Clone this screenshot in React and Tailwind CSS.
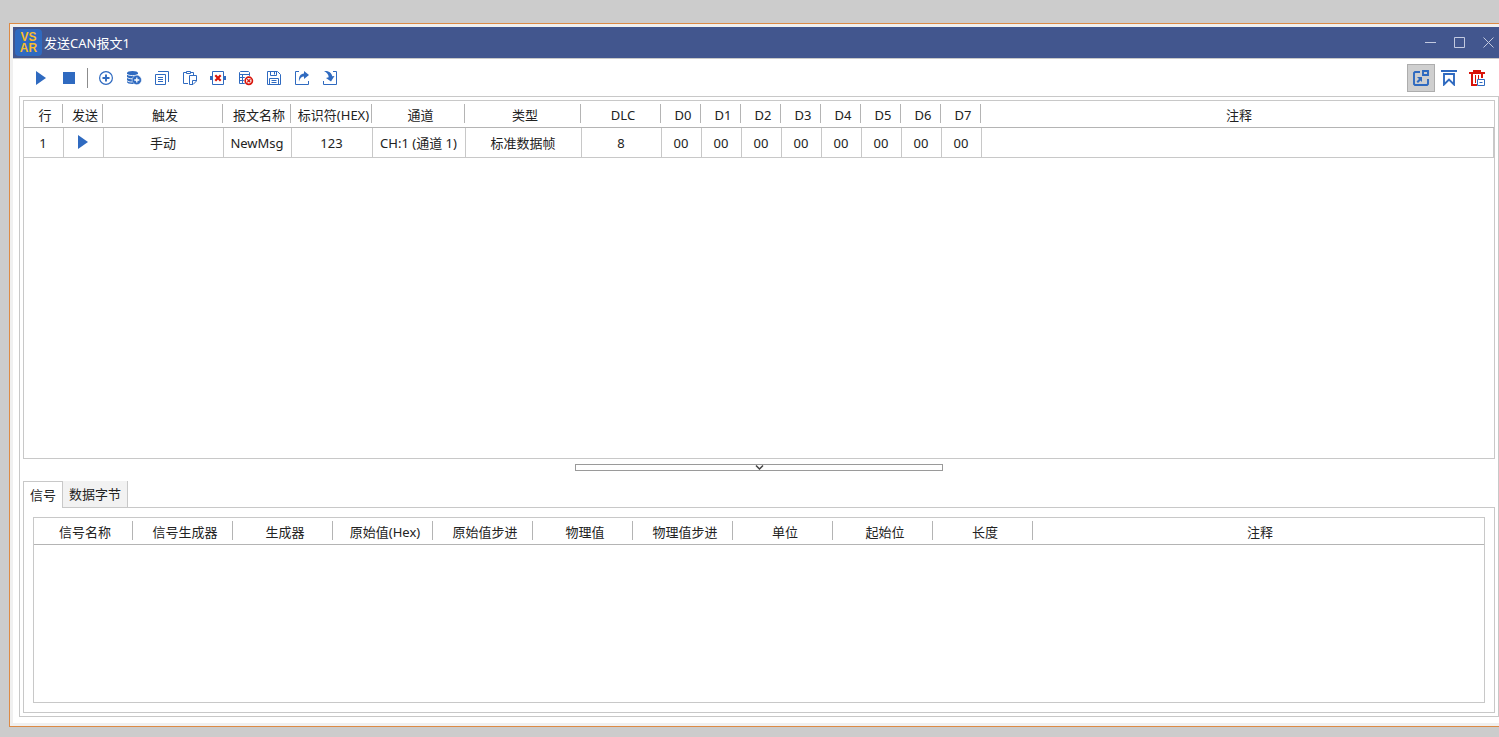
import { useState } from "react"

const BLUE = "#2f6ac0"
const RED = "#d8140a"

const messageColumns = [
  { name: "行", width: "w-10" },
  { name: "发送", width: "w-10" },
  { name: "触发", width: "w-[120px]" },
  { name: "报文名称", width: "w-[68px]" },
  { name: "标识符(HEX)", width: "w-[81px]" },
  { name: "通道", width: "w-[93px]" },
  { name: "类型", width: "w-[116px]" },
  { name: "DLC", width: "w-20" },
  { name: "D0", width: "w-10" },
  { name: "D1", width: "w-10" },
  { name: "D2", width: "w-10" },
  { name: "D3", width: "w-10" },
  { name: "D4", width: "w-10" },
  { name: "D5", width: "w-10" },
  { name: "D6", width: "w-10" },
  { name: "D7", width: "w-10" },
  { name: "注释", width: "" },
]

const signalColumns = [
  { name: "信号名称", width: "w-[100px]" },
  { name: "信号生成器", width: "w-[100px]" },
  { name: "生成器", width: "w-[100px]" },
  { name: "原始值(Hex)", width: "w-[100px]" },
  { name: "原始值步进", width: "w-[100px]" },
  { name: "物理值", width: "w-[100px]" },
  { name: "物理值步进", width: "w-[100px]" },
  { name: "单位", width: "w-[100px]" },
  { name: "起始位", width: "w-[100px]" },
  { name: "长度", width: "w-[100px]" },
  { name: "注释", width: "" },
]

const messages = [
  {
    trigger: "手动",
    name: "NewMsg",
    id: "123",
    channel: "CH:1 (通道 1)",
    type: "标准数据帧",
    dlc: "8",
    data: ["00", "00", "00", "00", "00", "00", "00", "00"],
  },
]

function Icon({ children }) {
  return (
    <svg width="16" height="16" viewBox="0 0 16 16" fill="none" stroke={BLUE} aria-hidden="true">
      {children}
    </svg>
  )
}

function PlayIcon() {
  return (
    <Icon>
      <path d="M3 1l10 7-10 7z" fill={BLUE} stroke="none" />
    </Icon>
  )
}

function StopIcon() {
  return (
    <Icon>
      <path d="M2 2h12v12H2z" fill={BLUE} stroke="none" />
    </Icon>
  )
}

function AddIcon() {
  return (
    <Icon>
      <circle cx="8" cy="8" r="6.4" strokeWidth="1.2" />
      <path d="M8 4.500v7M4.500 8h7" strokeWidth="1.900" />
    </Icon>
  )
}

function AddFromDbIcon() {
  return (
    <Icon>
      <path d="M1 3c0-1.200 2.400-2 5.500-2s5.500.800 5.500 2v9c0 1.200-2.400 2-5.500 2S1 13.200 1 12z" fill={BLUE} stroke="none" />
      <path d="M1 4.200c1 1 3 1.400 5.500 1.400s4.500-.4 5.500-1.400M1 7.400c1 1 3 1.400 5.500 1.400M1 10.600c1 1 3 1.400 5 1.400" stroke="#fff" strokeWidth=".9" />
      <circle cx="10.800" cy="10" r="4.700" fill={BLUE} stroke="#fff" strokeWidth=".5" />
      <path d="M10.800 7.500v5M8.300 10h5" stroke="#fff" strokeWidth="1.300" />
    </Icon>
  )
}

function CopyIcon() {
  return (
    <Icon>
      <path d="M1.500 4.500h10v10h-10zM4 1.500h10.500V12M4 7.500h5M4 9.500h5M4 11.500h5" />
    </Icon>
  )
}

function PasteIcon() {
  return (
    <Icon>
      <path d="M6 13.500H1.500v-11H4M9 2.500h2.500V5" />
      <path d="M4.500 1.500h4v2h-4z" />
      <path d="M7.500 5.500h7v5.500l-3.500 3.500H7.500z" fill="#fff" />
      <path d="M14.500 10.500h-4v4" />
    </Icon>
  )
}

function DeleteIcon() {
  return (
    <Icon>
      <path d="M2.500 1.500h11v13h-11z" />
      <path d="M0 8h2.500M13.500 8H16" strokeWidth="4" />
      <path d="M5.300 5.300l5.400 5.400M10.700 5.300l-5.400 5.400" stroke={RED} strokeWidth="2.200" />
    </Icon>
  )
}

function ClearTableIcon() {
  return (
    <Icon>
      <path d="M2.500 1.500h8l1 1v11h-10v-11zM1.500 4.500h10M1.500 7.500h6M1.500 10.500h5M4.500 4.500v9" />
      <circle cx="10.800" cy="10.800" r="5" fill="#fff" stroke="none" />
      <circle cx="10.800" cy="10.800" r="3.600" stroke={RED} strokeWidth="1.700" />
      <path d="M9.200 9.200l3.200 3.200M12.400 9.200l-3.200 3.200" stroke={RED} strokeWidth="1.300" />
    </Icon>
  )
}

function SaveIcon() {
  return (
    <Icon>
      <path d="M1.500 1.500h10l3 3v10h-13z" />
      <path d="M4.500 1.500v4h6v-4M8.500 2v2.500M3.500 14.500v-6h9v6M5.500 10.500h5M5.500 12.500h5" />
    </Icon>
  )
}

function ExportIcon() {
  return (
    <Icon>
      <path d="M5 1.500H1.500v13h13V11" />
      <path d="M10 1l5 4-5 4V6.500C7.500 6.500 6 8 5 11.500 4.500 6.500 6.500 3.700 10 3.500z" fill={BLUE} stroke="none" />
    </Icon>
  )
}

function ImportIcon() {
  return (
    <Icon>
      <path d="M11 1.500h3.500v13h-13V11" />
      <path d="M2 1c4-.4 7.500 1.300 8.300 5.200L12.500 6 9 11.500 4 8l2.700-.8C6.500 4.500 5 2.500 2 1z" fill={BLUE} stroke="none" />
    </Icon>
  )
}

function DetachIcon() {
  return (
    <Icon>
      <path d="M7 2H2L1 3v11l1 1h12l1-1V9" strokeWidth="1.900" />
      <path d="M10 1h5v4h-5z" strokeWidth="1.900" />
      <path d="M4 7h5v5L7.500 10.500 5 13l-1.500-1.500L6 9z" fill={BLUE} stroke="none" />
    </Icon>
  )
}

function PinTopIcon() {
  return (
    <Icon>
      <path d="M0 1h16" strokeWidth="2" />
      <path d="M3 14.500V4h10v10.500l-5-5z" strokeWidth="1.900" />
    </Icon>
  )
}

function TrashIcon() {
  return (
    <Icon>
      <path d="M0 3h16M4 1h8" stroke={RED} strokeWidth="2" />
      <path d="M8 15H3V3M13 3v5" stroke={RED} strokeWidth="2" />
      <path d="M6.500 5v8M9.500 5v4" stroke={RED} />
      <path d="M8.500 9.500h7v6h-7z" fill="#fff" />
      <path d="M10.500 12.500h3" />
    </Icon>
  )
}

const tools = [
  { label: "添加", icon: AddIcon },
  { label: "从数据库添加", icon: AddFromDbIcon },
  { label: "复制", icon: CopyIcon },
  { label: "粘贴", icon: PasteIcon },
  { label: "删除", icon: DeleteIcon },
  { label: "清空", icon: ClearTableIcon },
  { label: "保存", icon: SaveIcon },
  { label: "导出", icon: ExportIcon },
  { label: "导入", icon: ImportIcon },
]

function ToolButton({ label, icon: Glyph, active }) {
  return (
    <button
      type="button"
      aria-label={label}
      className={
        active
          ? "flex size-7 items-center justify-center border border-[#adadad] bg-[#cfcfcf]"
          : "flex size-7 items-center justify-center hover:bg-[#e5e5e5]"
      }
    >
      <Glyph />
    </button>
  )
}

function TitleBar() {
  return (
    <header className="flex h-8 shrink-0 items-center border-b border-[#c8c8c8] bg-[#42568e] pr-1 pl-0.5 text-white">
      <div className="flex size-[27px] flex-col items-center justify-center rounded-sm bg-[#2f6ac0] font-['Liberation_Sans',sans-serif] text-xs leading-[11px] font-bold text-[#f9bd2c]">
        <span>VS</span>
        <span>AR</span>
      </div>
      <h1 className="ml-0.5 flex-1">发送CAN报文1</h1>
      <div className="flex gap-[17px]">
        <button type="button" aria-label="最小化">
          <svg width="12" height="12" viewBox="0 0 12 12" fill="none" stroke="#c3cae0">
            <path d="M0 5.500h11" />
          </svg>
        </button>
        <button type="button" aria-label="最大化">
          <svg width="12" height="12" viewBox="0 0 12 12" fill="none" stroke="#c3cae0">
            <path d="M.5.500h10v10H.5z" />
          </svg>
        </button>
        <button type="button" aria-label="关闭">
          <svg width="12" height="12" viewBox="0 0 12 12" fill="none" stroke="#c3cae0">
            <path d="M.5.500l10 10M10.500.500l-10 10" />
          </svg>
        </button>
      </div>
    </header>
  )
}

function Toolbar() {
  return (
    <div className="flex h-[37px] shrink-0 items-center justify-between pr-2 pl-[14px]">
      <div className="flex items-center">
        <ToolButton label="启动" icon={PlayIcon} />
        <ToolButton label="停止" icon={StopIcon} />
        <div className="mx-1 h-5 w-px bg-[#8c8c8c]" />
        {tools.map((tool) => (
          <ToolButton key={tool.label} label={tool.label} icon={tool.icon} />
        ))}
      </div>
      <div className="flex">
        <ToolButton label="弹出" icon={DetachIcon} active />
        <ToolButton label="置顶" icon={PinTopIcon} />
        <ToolButton label="清除" icon={TrashIcon} />
      </div>
    </div>
  )
}

function Head({ columns }) {
  return (
    <thead>
      <tr className="h-[27px]">
        {columns.map((column, i) => (
          <th
            key={column.name}
            className={`${column.width} border-b border-[#b4b4b4] p-0 pt-[3px] align-top font-normal whitespace-nowrap`}
          >
            <div
              className={
                i < columns.length - 1
                  ? "mr-px flex h-[19px] items-center justify-center border-r border-[#b4b4b4] pt-0.5 pl-1"
                  : "flex h-[19px] items-center justify-center pt-0.5 pl-0.5"
              }
            >
              {column.name}
            </div>
          </th>
        ))}
      </tr>
    </thead>
  )
}

function Cell({ children }) {
  return (
    <td className="border-r border-b border-[#c8c8c8] p-0 pr-px text-center whitespace-nowrap">{children}</td>
  )
}

function MessageTable() {
  return (
    <div className="min-h-0 flex-[357] overflow-hidden border border-[#c8c8c8]">
      <table className="w-full table-fixed border-separate border-spacing-0">
        <Head columns={messageColumns} />
        <tbody>
          {messages.map((message, i) => (
            <tr key={message.id} className="h-[30px]">
              <Cell>{i + 1}</Cell>
              <Cell>
                <button type="button" aria-label="发送" className="flex w-full justify-center pr-px pb-0.5">
                  <PlayIcon />
                </button>
              </Cell>
              <Cell>{message.trigger}</Cell>
              <Cell>{message.name}</Cell>
              <Cell>{message.id}</Cell>
              <Cell>{message.channel}</Cell>
              <Cell>{message.type}</Cell>
              <Cell>{message.dlc}</Cell>
              {message.data.map((byte, n) => (
                <Cell key={n}>{byte}</Cell>
              ))}
              <Cell></Cell>
            </tr>
          ))}
        </tbody>
      </table>
    </div>
  )
}

function SignalPanel() {
  const [tab, setTab] = useState("信号")

  return (
    <div className="flex min-h-0 flex-[232] flex-col">
      <div role="tablist" className="flex h-[26px] shrink-0">
        {["信号", "数据字节"].map((name) => (
          <button
            key={name}
            type="button"
            role="tab"
            aria-selected={tab === name}
            onClick={() => setTab(name)}
            className={
              tab === name
                ? "relative -mb-px border border-b-0 border-[#c8c8c8] bg-white px-1.5"
                : "border-r border-[#c8c8c8] bg-[#f2f2f2] px-1.5"
            }
          >
            {name}
          </button>
        ))}
      </div>
      <div className="flex flex-1 flex-col border border-[#c8c8c8] p-[9px]">
        <div className="flex-1 border border-[#c8c8c8]">
          <table className="w-full table-fixed border-separate border-spacing-0">
            <Head columns={signalColumns} />
          </table>
        </div>
      </div>
    </div>
  )
}

export default function App() {
  return (
    <div className="flex h-screen flex-col overflow-hidden bg-[#cccccc] pt-[23px] pb-[10px] pl-[9px] font-['Noto_Sans','Noto_Sans_CJK_SC',sans-serif] text-[13px] leading-5 text-[#222222]">
      <div className="flex min-h-0 flex-1 flex-col border border-r-0 border-[#dc8a45] bg-[#f0f0f0] py-[3px] pl-[3px]">
        <TitleBar />
        <main className="flex min-h-0 flex-1 flex-col bg-white pb-1.5">
          <Toolbar />
          <div className="ml-1.5 flex min-h-0 flex-1 flex-col border border-[#c8c8c8] p-[3px]">
            <MessageTable />
            <button
              type="button"
              aria-label="折叠"
              className="mt-[5px] mb-[10px] flex h-[7px] w-1/4 shrink-0 items-center justify-center self-center border border-[#9a9a9a]"
            >
              <svg width="9" height="5" viewBox="0 0 9 5" fill="none" stroke="#444" strokeWidth="1.500">
                <path d="M1 .5l3.500 3.500L8 .5" />
              </svg>
            </button>
            <SignalPanel />
          </div>
        </main>
      </div>
    </div>
  )
}
